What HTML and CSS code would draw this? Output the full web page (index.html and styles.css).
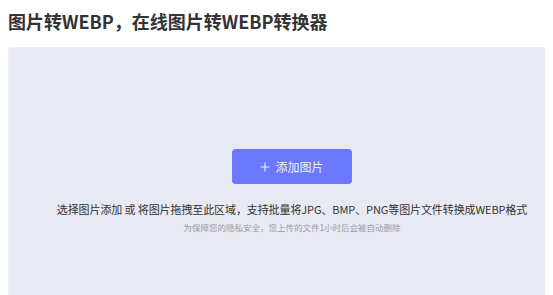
FILE: index.html
```html
<!DOCTYPE html>
<html lang="zh-CN">
<head>
    <meta charset="UTF-8">
    <meta name="viewport" content="width=device-width, initial-scale=1.0">
    <title>图片转WEBP</title>
    <link rel="stylesheet" href="styles.css">
</head>
<body>
    <h1 class="title">图片转WEBP，在线图片转WEBP转换器</h1>
    <div class="upload-area">
        <button class="add-btn" type="button">
            <svg class="plus" width="10" height="10" viewBox="0 0 10 10">
                <path d="M5 0.5v9M0.5 5h9" stroke="currentColor" stroke-width="1.1" fill="none"/>
            </svg>
            <span>添加图片</span>
        </button>
        <p class="tip">选择图片添加 或 将图片拖拽至此区域，支持批量将JPG、BMP、PNG等图片文件转换成WEBP格式</p>
        <p class="note">为保障您的隐私安全，您上传的文件1小时后会被自动删除</p>
    </div>
</body>
</html>
```

FILE: styles.css
```css
html {
    overflow: hidden;
}
body {
    font-family: "Noto Sans CJK SC", "Noto Sans", sans-serif;
    margin: 8px;
    padding: 0;
    background: #fff;
    color: #333;
}
.title {
    font-size: 18px;
    font-weight: bold;
    line-height: 26px;
    margin: 0 0 13px;
    color: #333;
}
.upload-area {
    width: 568px;
    height: 248px;
    box-sizing: border-box;
    background: #e7eaf3;
    border: 1px solid #edf0f6;
    border-bottom: none;
    border-radius: 3px 3px 0 0;
    padding-top: 101px;
    display: flex;
    flex-direction: column;
    align-items: center;
}
.add-btn {
    width: 120px;
    height: 35px;
    background: #6b77fe;
    color: #eef0ff;
    border: none;
    border-radius: 4px;
    font-family: inherit;
    font-size: 12px;
    display: flex;
    align-items: center;
    justify-content: center;
    gap: 5px;
    cursor: pointer;
}
.tip {
    margin: 16px 0 0;
    font-size: 11px;
    letter-spacing: -0.1px;
    line-height: 18px;
    color: #333;
    white-space: nowrap;
}
.note {
    margin: 3px 0 0;
    font-size: 8.5px;
    line-height: 12px;
    color: #9a9ca8;
    white-space: nowrap;
}
```
